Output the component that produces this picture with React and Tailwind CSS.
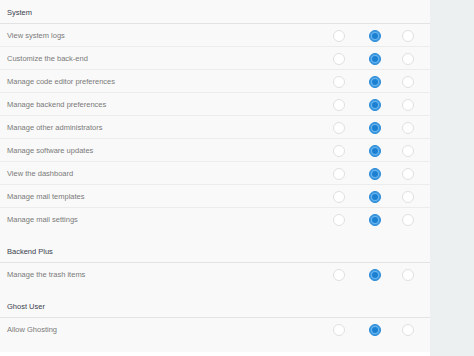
const sections = [
  {
    title: "System",
    items: [
      "View system logs",
      "Customize the back-end",
      "Manage code editor preferences",
      "Manage backend preferences",
      "Manage other administrators",
      "Manage software updates",
      "View the dashboard",
      "Manage mail templates",
      "Manage mail settings",
    ],
  },
  { title: "Backend Plus", items: ["Manage the trash items"] },
  { title: "Ghost User", items: ["Allow Ghosting"] },
];

const Radio = ({ checked }) =>
  checked ? (
    <span className="flex items-center justify-center w-[12px] h-[12px] rounded-full bg-[#3d9be3] border border-[#2a8ad8]">
      <span className="w-[6px] h-[6px] rounded-full bg-[#1b80d2] ring-1 ring-[#6cb5ec]" />
    </span>
  ) : (
    <span className="w-[12px] h-[12px] rounded-full bg-white border border-[#e0e0e0]" />
  );

const Row = ({ label }) => (
  <div className="flex items-center h-[23px] pt-[1px] border-b border-[#ececec] last:border-b-0">
    <span className="flex-1 pl-[7px] text-[7.5px] text-[#7a7a7a]">{label}</span>
    <div className="flex items-center w-[110px] pl-[13px]">
      <div className="w-[36px] flex"><Radio /></div>
      <div className="w-[33px] flex"><Radio checked /></div>
      <div className="flex"><Radio /></div>
    </div>
  </div>
);

export default function App() {
  return (
    <div className="flex w-[474px] h-[356px] bg-white" style={{ fontFamily: "'Liberation Sans', Arial, sans-serif" }}>
      <div className="w-[430px] h-[352px] bg-[#f9f9f9]">
        {sections.map((s) => (
          <div key={s.title} className="pb-[8px]">
            <div className="h-[24px] flex items-center pt-[3px] pl-[7px] border-b border-[#e3e3e3] text-[7.5px] text-[#3a4250]">
              {s.title}
            </div>
            {s.items.map((it) => (
              <Row key={it} label={it} />
            ))}
          </div>
        ))}
      </div>
      <div className="flex-1 bg-[#edf0f1]" />
    </div>
  );
}
